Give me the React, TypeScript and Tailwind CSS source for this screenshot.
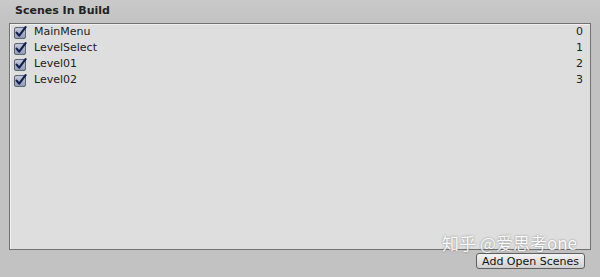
import React from "react";

const scenes = ["MainMenu", "LevelSelect", "Level01", "Level02"];

function Check() {
  return (
    <svg width="13" height="13" viewBox="0 0 13 13" className="shrink-0">
      <defs>
        <linearGradient id="cb" x1="0" y1="0" x2="0" y2="1">
          <stop offset="0" stopColor="#c4cbdb" />
          <stop offset="1" stopColor="#8e9ab4" />
        </linearGradient>
      </defs>
      <rect x="0.5" y="1.5" width="11" height="11" rx="1.5" fill="url(#cb)" stroke="#5d6576" />
      <path d="M2.6 6.6 L5.2 9.6 L11.6 1.2" fill="none" stroke="#15204a" strokeWidth="2.2" strokeLinecap="round" strokeLinejoin="round" />
    </svg>
  );
}

export default function App() {
  return (
    <div
      className="relative flex h-[277px] w-[600px] flex-col bg-[#c2c2c2] text-[11px] text-[#222]"
      style={{ fontFamily: '"DejaVu Sans", Verdana, sans-serif' }}
    >
      <div className="flex h-[23px] items-center bg-gradient-to-b from-[#c9c9c9] to-[#c3c3c3] pl-[15px] font-bold">
        Scenes In Build
      </div>
      <div className="mx-[9px] flex h-[227px] flex-col border border-[#727272] bg-[#dedede] shadow-[inset_1px_1px_0_#f0f0f0]">
        {scenes.map((s, i) => (
          <div key={s} className="flex h-[16px] items-center pl-[4px] pr-[7px]">
            <Check />
            <span className="ml-[7px] flex-1">{s}</span>
            <span>{i}</span>
          </div>
        ))}
      </div>
      <div className="flex justify-end pr-[15px] pt-[3px]">
        <button className="h-[16px] rounded-[3px] border border-[#5f5f5f] bg-gradient-to-b from-[#f4f4f4] to-[#cfcfcf] px-[5px] text-[11px] leading-[13px] text-[#111]">
          Add Open Scenes
        </button>
      </div>
      <div
        className="absolute left-[442px] top-[234px] text-[17px] leading-[18px] text-white opacity-85 [text-shadow:0_0_2px_rgba(0,0,0,0.5)]"
        style={{ fontFamily: '"Noto Sans CJK SC", sans-serif' }}
      >
        知乎 @爱思考one
      </div>
    </div>
  );
}
